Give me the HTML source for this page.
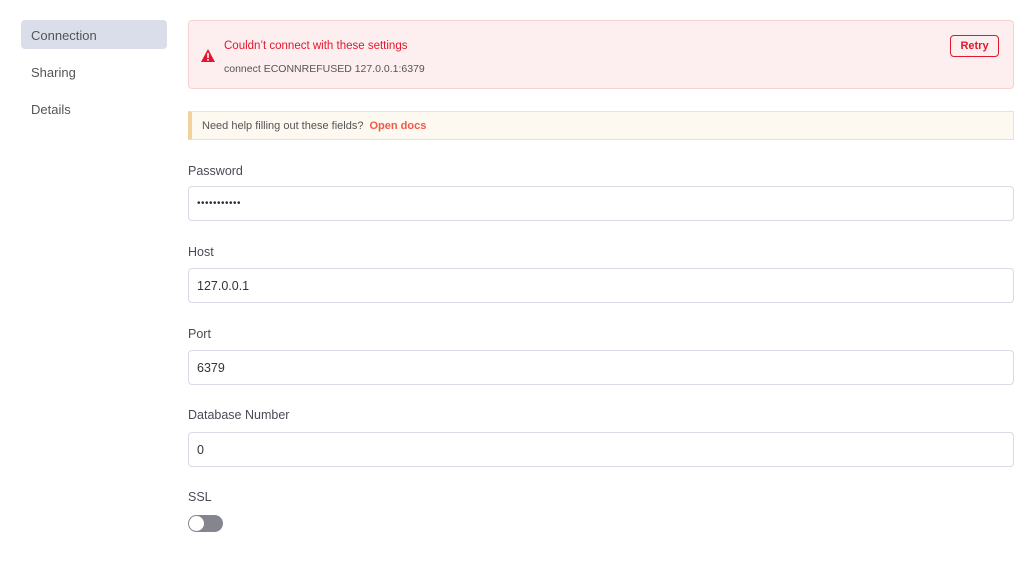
<!DOCTYPE html>
<html><head><style>
*{box-sizing:border-box;margin:0;padding:0}
body{width:1035px;height:571px;background:#fff;font-family:"Liberation Sans",sans-serif;position:relative;overflow:hidden;color:#4a4a55}
.nav{position:absolute;left:21px;width:146px;height:29px;border-radius:4px;font-size:13px;padding:8px 10px;color:#555}
.sel{background:#dadeea}
.err{position:absolute;left:188px;top:20px;width:826px;height:69px;background:#fdeff0;border:1px solid #f8d0d4;border-radius:4px}
.help{position:absolute;left:188px;top:111px;width:826px;height:29px;background:#fdf8f0;border:1px solid #f0e2c8;border-left:4px solid #f1d29e;font-size:11px;padding:8px 10px;color:#555}
.lbl{position:absolute;left:188px;font-size:12.5px;color:#4a4a55}
.inp{position:absolute;left:188px;width:826px;height:35px;border:1px solid #d8dae4;border-radius:4px;font-size:12.5px;padding:10px 8px;color:#333}
</style></head><body>
<div class="nav sel" style="top:20px">Connection</div>
<div class="nav" style="top:57px">Sharing</div>
<div class="nav" style="top:94px">Details</div>
<div class="err">
<svg style="position:absolute;left:12px;top:28px" width="14" height="13" viewBox="0 0 14 13"><path d="M7 0L14 13H0Z" fill="#e0182d"/><rect x="6.2" y="4" width="1.6" height="5" fill="#fff"/><rect x="6.2" y="10" width="1.6" height="1.6" fill="#fff"/></svg>
<div style="position:absolute;left:35px;top:19px;font-size:11.5px;color:#e0182d">Couldn’t connect with these settings</div>
<div style="position:absolute;left:35px;top:42px;font-size:10.5px;color:#555">connect ECONNREFUSED 127.0.0.1:6379</div>
<div style="position:absolute;left:761px;top:14px;width:49px;height:22px;border:1px solid #e0182d;border-radius:4px;color:#e0182d;font-size:11px;font-weight:bold;text-align:center;line-height:20px">Retry</div>
</div>
<div class="help">Need help filling out these fields? <span style="color:#f2584a;font-weight:bold;margin-left:3px">Open docs</span></div>
<div class="lbl" style="top:164px">Password</div>
<div class="inp" style="top:186px;font-size:10px;letter-spacing:0.5px;padding-top:11px">•••••••••••</div>
<div class="lbl" style="top:245px">Host</div>
<div class="inp" style="top:268px">127.0.0.1</div>
<div class="lbl" style="top:327px">Port</div>
<div class="inp" style="top:350px">6379</div>
<div class="lbl" style="top:408px">Database Number</div>
<div class="inp" style="top:432px">0</div>
<div class="lbl" style="top:490px">SSL</div>
<div style="position:absolute;left:188px;top:515px;width:35px;height:17px;border-radius:9px;background:#85858f"><div style="position:absolute;left:1px;top:1px;width:15px;height:15px;border-radius:50%;background:#fff"></div></div>
</body></html>
